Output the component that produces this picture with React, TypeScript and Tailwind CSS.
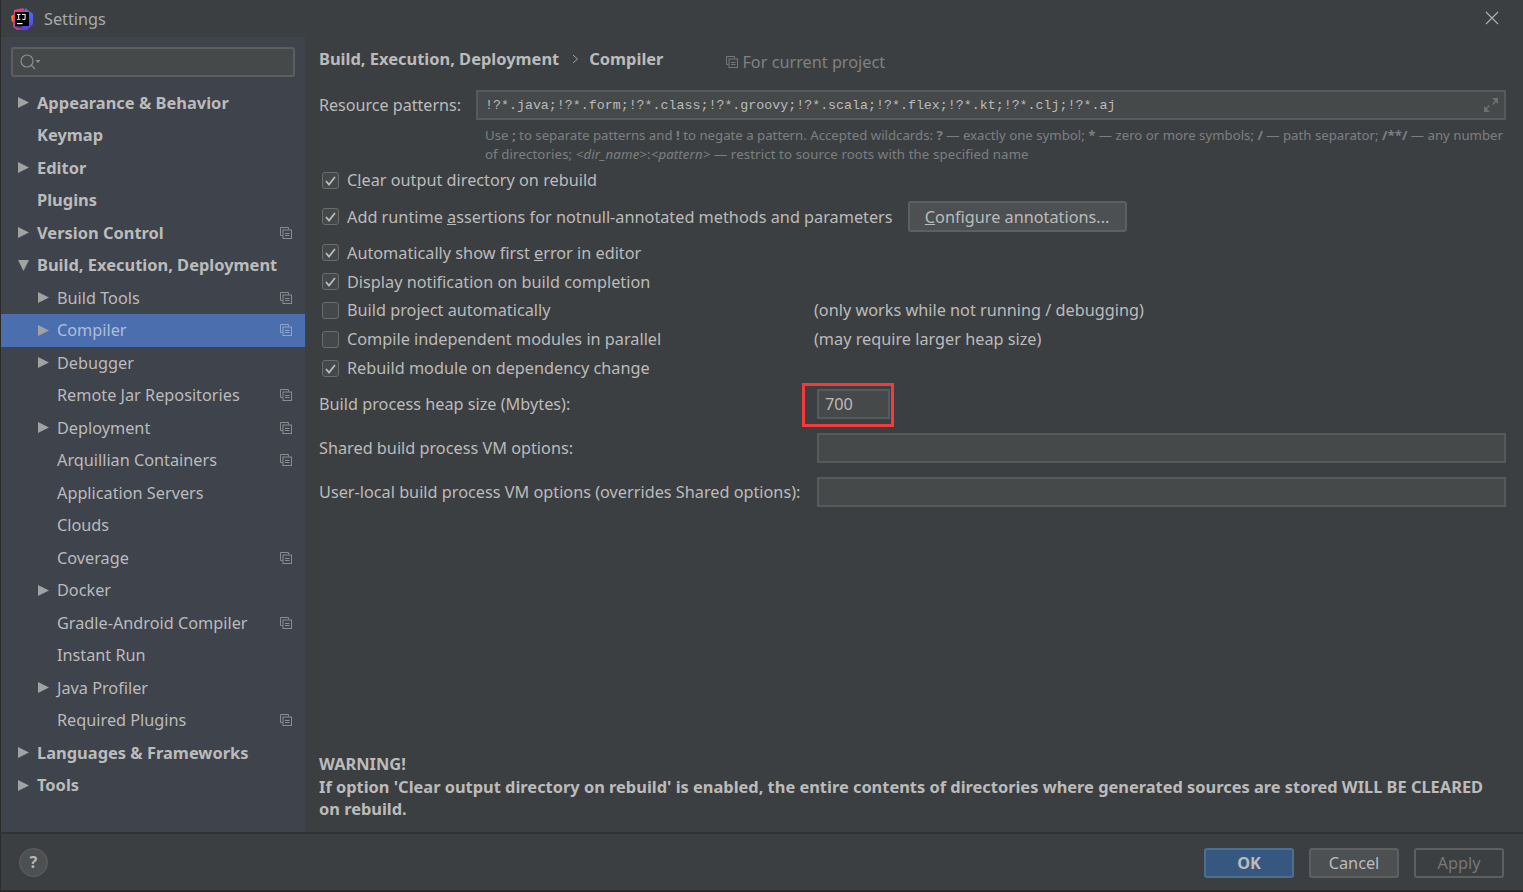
import type { ReactNode } from 'react'

const tree: { label: string; level: 0 | 1; arrow?: 'right' | 'down'; bold?: boolean; copy?: boolean; selected?: boolean }[] = [
  { label: 'Appearance & Behavior', level: 0, arrow: 'right', bold: true },
  { label: 'Keymap', level: 0, bold: true },
  { label: 'Editor', level: 0, arrow: 'right', bold: true },
  { label: 'Plugins', level: 0, bold: true },
  { label: 'Version Control', level: 0, arrow: 'right', bold: true, copy: true },
  { label: 'Build, Execution, Deployment', level: 0, arrow: 'down', bold: true },
  { label: 'Build Tools', level: 1, arrow: 'right', copy: true },
  { label: 'Compiler', level: 1, arrow: 'right', copy: true, selected: true },
  { label: 'Debugger', level: 1, arrow: 'right' },
  { label: 'Remote Jar Repositories', level: 1, copy: true },
  { label: 'Deployment', level: 1, arrow: 'right', copy: true },
  { label: 'Arquillian Containers', level: 1, copy: true },
  { label: 'Application Servers', level: 1 },
  { label: 'Clouds', level: 1 },
  { label: 'Coverage', level: 1, copy: true },
  { label: 'Docker', level: 1, arrow: 'right' },
  { label: 'Gradle-Android Compiler', level: 1, copy: true },
  { label: 'Instant Run', level: 1 },
  { label: 'Java Profiler', level: 1, arrow: 'right' },
  { label: 'Required Plugins', level: 1, copy: true },
  { label: 'Languages & Frameworks', level: 0, arrow: 'right', bold: true },
  { label: 'Tools', level: 0, arrow: 'right', bold: true },
]

function Logo() {
  return (
    <svg width="22" height="22" viewBox="0 0 22 22">
      <defs>
        <linearGradient id="ij-a" x1="0" y1="0" x2="1" y2="1">
          <stop offset="0" stopColor="#fc3b6e" />
          <stop offset="1" stopColor="#8a3fd0" />
        </linearGradient>
        <linearGradient id="ij-b" x1="0" y1="0" x2="0" y2="1">
          <stop offset="0" stopColor="#4a7cf0" />
          <stop offset="1" stopColor="#5a3fe0" />
        </linearGradient>
      </defs>
      <path d="M0 8 L4 6 L6 13 L1 14 Z" fill="#f97a12" />
      <path d="M3 2 L12 0 L16 5 L5 8 L4 19 L9 20 L16 21 L6 22 L2 19 Z" fill="url(#ij-a)" />
      <path d="M14 0 L22 6 L22 16 L16 22 L10 22 L14 4 Z" fill="url(#ij-b)" />
      <rect x="4" y="4" width="14" height="14" fill="#000" />
      <rect x="6" y="15" width="5.5" height="1.2" fill="#fff" />
      <path d="M6 6h3.4v.9H8.2v4h1.2v.9H6v-.9h1.2v-4H6z" fill="#fff" />
      <path d="M11 6h3.6v4.4c0 1-.7 1.5-1.8 1.5-.8 0-1.4-.3-1.8-.9l.6-.6c.3.4.7.6 1.1.6.5 0 .9-.2.9-.8V6.9H11z" fill="#fff" />
    </svg>
  )
}

function CopyIcon({ selected }: { selected?: boolean }) {
  const color = selected ? '#8fa3c4' : '#8a8d8f'
  return (
    <svg width="12" height="12" viewBox="0 0 12 12" fill="none" stroke={color} strokeWidth="1">
      <path d="M8.5 2.5V.5H.5v8h2" />
      <rect x="3" y="3" width="8.5" height="8.5" />
      <path d="M5 6.5h4.5M5 8.5h4.5" />
    </svg>
  )
}

function Arrow({ dir }: { dir: 'right' | 'down' }) {
  return (
    <svg width="11" height="11" viewBox="0 0 11 11" className="shrink-0">
      <path d={dir === 'right' ? 'M0 0 L11 5.5 L0 11 Z' : 'M0 0 L11 0 L5.5 11 Z'} fill="#a0a2a4" />
    </svg>
  )
}

function Check({ checked, children, note, nudge }: { checked?: boolean; children: ReactNode; note?: string; nudge?: boolean }) {
  return (
    <div className="flex items-center h-[29px] pl-[3px]">
      <div className="w-[17px] h-[17px] rounded-[3px] border border-[#6b6b6b] bg-[#43494a] flex items-center justify-center shrink-0">
        {checked && (
          <svg width="11" height="10" viewBox="0 0 11 10" fill="none" stroke="#bbbbbb" strokeWidth="1.8">
            <path d="M1 5 L4 8.5 L10 1" />
          </svg>
        )}
      </div>
      <span className={`ml-[8px] w-[467px] shrink-0 ${nudge ? 'pt-[1px]' : ''}`}>{children}</span>
      {note && <span>{note}</span>}
    </div>
  )
}

function Field({ label, wide = true, value, extra }: { label: string; wide?: boolean; value?: string; extra?: string }) {
  return (
    <div className={`flex items-center h-[30px] ${extra ?? ''}`}>
      <span className="w-[498px] shrink-0">{label}</span>
      {wide ? (
        <div className="flex-1 h-full border-2 border-[#565a5c] bg-[#45494a]" />
      ) : (
        <div className="relative w-[73px] h-full border-2 border-[#565a5c] bg-[#45494a] pl-[6px] flex items-center">
          {value}
          <div className="absolute left-[-17px] top-[-8px] w-[92px] h-[44px] border-[3px] border-[#f23b3b]" />
        </div>
      )}
    </div>
  )
}

export default function App() {
  return (
    <div
      className="w-[1523px] h-[892px] flex flex-col overflow-hidden bg-[#3c3f41] text-[#bbbbbb] text-[16.25px] border-l border-b-2 border-[#2b2b2b]"
      style={{ fontFamily: '"Noto Sans", "Open Sans", sans-serif' }}
    >
      {/* title bar */}
      <div className="h-[37px] shrink-0 flex items-center relative pl-[10px]">
        <Logo />
        <span className="ml-[11px] pt-[1px] text-[#a9abad]">Settings</span>
        <svg width="14" height="14" viewBox="0 0 14 14" className="absolute left-[1484px] top-[11px]" stroke="#b0b2b4" strokeWidth="1.1">
          <path d="M1 1 L13 13 M13 1 L1 13" />
        </svg>
      </div>

      <div className="flex-1 flex min-h-0">
        {/* sidebar */}
        <div className="w-[304px] shrink-0 bg-[#3f434c] flex flex-col">
          <div className="mx-[10px] mt-[10px] mb-[9.7px] h-[30px] shrink-0 rounded-[3px] border-2 border-[#5c5f60] bg-[#45494a] flex items-center pl-[6px]">
            <svg width="22" height="18" viewBox="0 0 22 18" fill="none" stroke="#8c8e90" strokeWidth="1.2">
              <circle cx="8" cy="8" r="6" />
              <path d="M12.5 12.5 L16 16" />
              <path d="M16.5 7 L21.5 7 L19 10 Z" fill="#8c8e90" stroke="none" />
            </svg>
          </div>
          {tree.map((item) => (
            <div
              key={item.label}
              className={`h-[32.5px] shrink-0 flex items-center pr-[13px] ${item.level === 0 ? 'pl-[17px]' : 'pl-[37px]'} ${item.selected ? 'bg-[#4b6eaf]' : ''}`}
            >
              <span className="w-[19px] shrink-0">{item.arrow && <Arrow dir={item.arrow} />}</span>
              <span className={`flex-1 ${item.bold ? 'font-bold text-[16.45px]' : ''} ${item.selected ? 'text-[#aebfd8]' : ''}`}>{item.label}</span>
              {item.copy && <CopyIcon selected={item.selected} />}
            </div>
          ))}
        </div>

        {/* content */}
        <div className="flex-1 min-w-0 flex flex-col pl-[14px] pr-[17px]">
          <div className="h-[30px] mt-[7px] flex items-center">
            <span className="font-bold text-[16.45px]">Build, Execution, Deployment</span>
            <svg width="7" height="10" viewBox="0 0 7 10" fill="none" stroke="#a0a2a4" strokeWidth="1" className="ml-[13px]">
              <path d="M1 1 L5.5 5 L1 9" />
            </svg>
            <span className="font-bold text-[16.45px] ml-[10px]">Compiler</span>
            <svg width="12" height="12" viewBox="0 0 12 12" fill="none" stroke="#777" strokeWidth="1" className="ml-[63px] mt-[6px]">
              <path d="M8.5 2.5V.5H.5v8h2" />
              <rect x="3" y="3" width="8.5" height="8.5" />
              <path d="M5 6.5h4.5M5 8.5h4.5" />
            </svg>
            <span className="ml-[4px] mt-[6px] text-[#7f8183]">For current project</span>
          </div>

          <div className="flex items-center h-[30px] mt-[16px]">
            <span className="w-[157px] shrink-0 text-[16.1px]">Resource patterns:</span>
            <div className="relative flex-1 h-full border-2 border-[#565a5c] bg-[#45494a] flex items-center pl-[7px] pt-[2px] text-[13.3px]" style={{ fontFamily: '"Liberation Mono", monospace' }}>
              !?*.java;!?*.form;!?*.class;!?*.groovy;!?*.scala;!?*.flex;!?*.kt;!?*.clj;!?*.aj
              <svg width="16" height="16" viewBox="0 0 16 16" className="absolute right-[5px] top-[5px]" fill="#6e7173">
                <path d="M9 1h6v6l-2-2-3 3-1-1 3-3zM7 15H1V9l2 2 3-3 1 1-3 3z" />
              </svg>
            </div>
          </div>

          <div className="ml-[166px] mt-[6px] text-[13.22px] leading-[19px] text-[#7c7f81] whitespace-nowrap">
            <div>Use <b>;</b> to separate patterns and <b>!</b> to negate a pattern. Accepted wildcards: <b>?</b> — exactly one symbol; <b>*</b> — zero or more symbols; <b>/</b> — path separator; <b>/**/</b> — any number</div>
            <div className="tracking-[0.12px]">of directories; <i>&lt;dir_name&gt;</i>:<i>&lt;pattern&gt;</i> — restrict to source roots with the specified name</div>
          </div>

          <div className="mt-[2px]">
            <Check checked>C<u>l</u>ear output directory on rebuild</Check>
          </div>
          <div className="flex items-center h-[31px] mt-[6px] pl-[3px]">
            <div className="w-[17px] h-[17px] rounded-[3px] border border-[#6b6b6b] bg-[#43494a] flex items-center justify-center shrink-0">
              <svg width="11" height="10" viewBox="0 0 11 10" fill="none" stroke="#bbbbbb" strokeWidth="1.8">
                <path d="M1 5 L4 8.5 L10 1" />
              </svg>
            </div>
            <span className="ml-[8px] pt-[1px]">Add runtime <u>a</u>ssertions for notnull-annotated methods and parameters</span>
            <div className="ml-[15px] w-[219px] h-full rounded-[3px] border-2 border-[#5e6060] bg-[#4c5052] flex items-center justify-center pt-[1px]">
              <span><u>C</u>onfigure annotations...</span>
            </div>
          </div>
          <div className="mt-[6px]">
            <Check checked nudge>Automatically show first <u>e</u>rror in editor</Check>
            <Check checked nudge>Display notification on build completion</Check>
            <Check note="(only works while not running / debugging)">Build project automatically</Check>
            <Check note="(may require larger heap size)">Compile independent modules in parallel</Check>
            <Check checked>Rebuild module on dependency change</Check>
          </div>

          <Field label="Build process heap size (Mbytes):" wide={false} value="700" extra="mt-[6px]" />
          <Field label="Shared build process VM options:" extra="mt-[14px]" />
          <Field label="User-local build process VM options (overrides Shared options):" extra="mt-[14px]" />

          <div className="mt-auto mb-[11.5px] font-bold text-[16.4px] leading-[22.5px]">
            <div>WARNING!</div>
            <div>If option 'Clear output directory on rebuild' is enabled, the entire contents of directories where generated sources are stored WILL BE CLEARED on rebuild.</div>
          </div>
        </div>
      </div>

      {/* footer */}
      <div className="h-[58px] shrink-0 border-t-2 border-[#323232] flex items-center pl-[18px] pr-[19px] pt-[1px]">
        <div className="w-[29px] h-[29px] rounded-full border border-[#5f6162] bg-[#4c5052] flex items-center justify-center font-bold text-[#b5b7b9]">?</div>
        <div className="ml-auto flex gap-[15px]">
          <div className="w-[90px] h-[30px] rounded-[3px] border-2 border-[#4c708c] bg-[#365880] flex items-center justify-center font-bold pt-[1px]">OK</div>
          <div className="w-[90px] h-[30px] rounded-[3px] border-2 border-[#5e6060] bg-[#4c5052] flex items-center justify-center pt-[1px]">Cancel</div>
          <div className="w-[90px] h-[30px] rounded-[3px] border-2 border-[#5e6060] flex items-center justify-center text-[#777777] pt-[1px]">Apply</div>
        </div>
      </div>
    </div>
  )
}
